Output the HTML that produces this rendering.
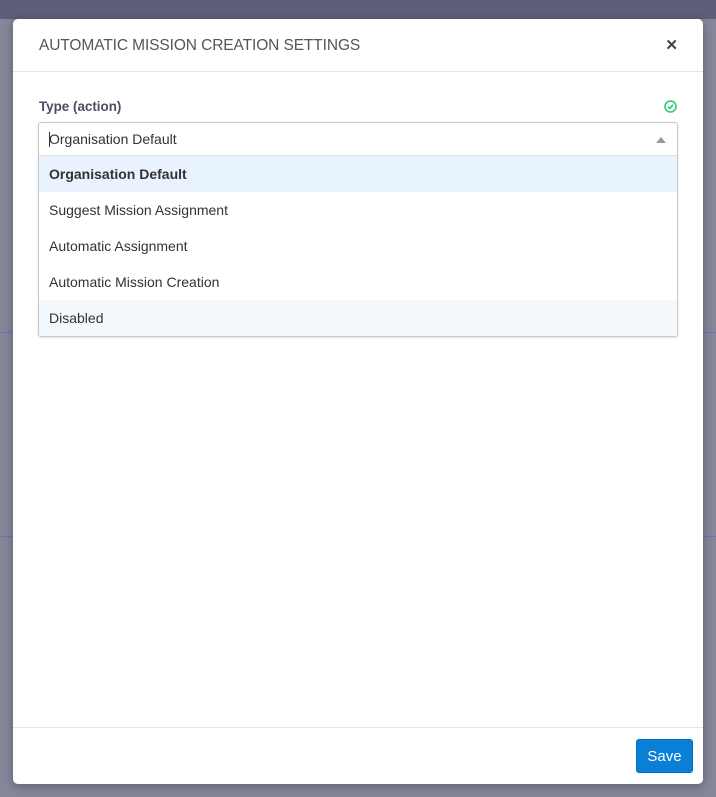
<!DOCTYPE html>
<html><head><style>
body{margin:0;width:716px;height:797px;overflow:hidden;background:#85869a;font-family:"Liberation Sans",sans-serif;position:relative}
.top{position:absolute;left:0;top:0;width:716px;height:19px;background:#5d5e7a}
.band{position:absolute;left:0;width:716px;height:1px;background:#5e7ab0}
.modal{position:absolute;left:13px;top:19px;width:690px;height:765px;background:#fff;border-radius:5px;box-shadow:0 2px 10px rgba(0,0,0,.3)}
.hdr{height:52px;border-bottom:1px solid #e4e4e4;position:relative}
.hdr h4{margin:0;position:absolute;left:26px;top:18px;font-size:15.5px;font-weight:normal;color:#555;letter-spacing:-0.1px}
.x{position:absolute;right:25px;top:17px;font-size:15px;font-weight:bold;color:#444}
.lbl{position:absolute;left:26px;top:80px;font-size:13.4px;font-weight:bold;color:#4a4d63}
.chk{position:absolute;left:651px;top:81px}
.sel{position:absolute;left:25px;top:103px;width:638px;height:213px;border:1px solid #c8c8c8;border-radius:3px;box-shadow:0 1px 2px rgba(0,0,0,.12);overflow:hidden}
.in{height:32px;border-bottom:1px solid #e2e2e2;font-size:14px;color:#333;line-height:32px;padding-left:10px;position:relative}
.in:before{content:"";position:absolute;left:10px;top:9px;width:1px;height:15px;background:#333}
.tri{position:absolute;right:11px;top:14px;border-left:5px solid transparent;border-right:5px solid transparent;border-bottom:6px solid #999}
.opt{height:36px;line-height:36px;padding-left:10px;font-size:14px;color:#333}
.footer{position:absolute;left:0;top:708px;width:690px;border-top:1px solid #e4e4e4}
.save{position:absolute;left:623px;top:720px;width:57px;height:34px;background:#0a7fd6;border:1px solid #0670c0;border-radius:3px;color:#fff;font-size:15px;line-height:34px;text-align:center;box-sizing:border-box}
</style></head><body>
<div class="top"></div>
<div class="band" style="top:332px"></div>
<div class="band" style="top:536px"></div>
<div class="modal">
<div class="hdr"><h4>AUTOMATIC MISSION CREATION SETTINGS</h4><span class="x">✕</span></div>
<div class="lbl">Type (action)</div>
<svg class="chk" width="13" height="13" viewBox="0 0 13 13"><circle cx="6.5" cy="6.5" r="5.5" fill="none" stroke="#2bcf6c" stroke-width="1.6"/><path d="M4 6.7L5.8 8.4 9 4.8" fill="none" stroke="#2bcf6c" stroke-width="1.6"/></svg>
<div class="sel">
<div class="in">Organisation Default<span class="tri"></span></div>
<div class="opt" style="background:#e9f3fd;font-weight:bold">Organisation Default</div>
<div class="opt">Suggest Mission Assignment</div>
<div class="opt">Automatic Assignment</div>
<div class="opt">Automatic Mission Creation</div>
<div class="opt" style="background:#f3f8fd">Disabled</div>
</div>
<div class="footer"></div>
<div class="save">Save</div>
</div>
</body></html>
